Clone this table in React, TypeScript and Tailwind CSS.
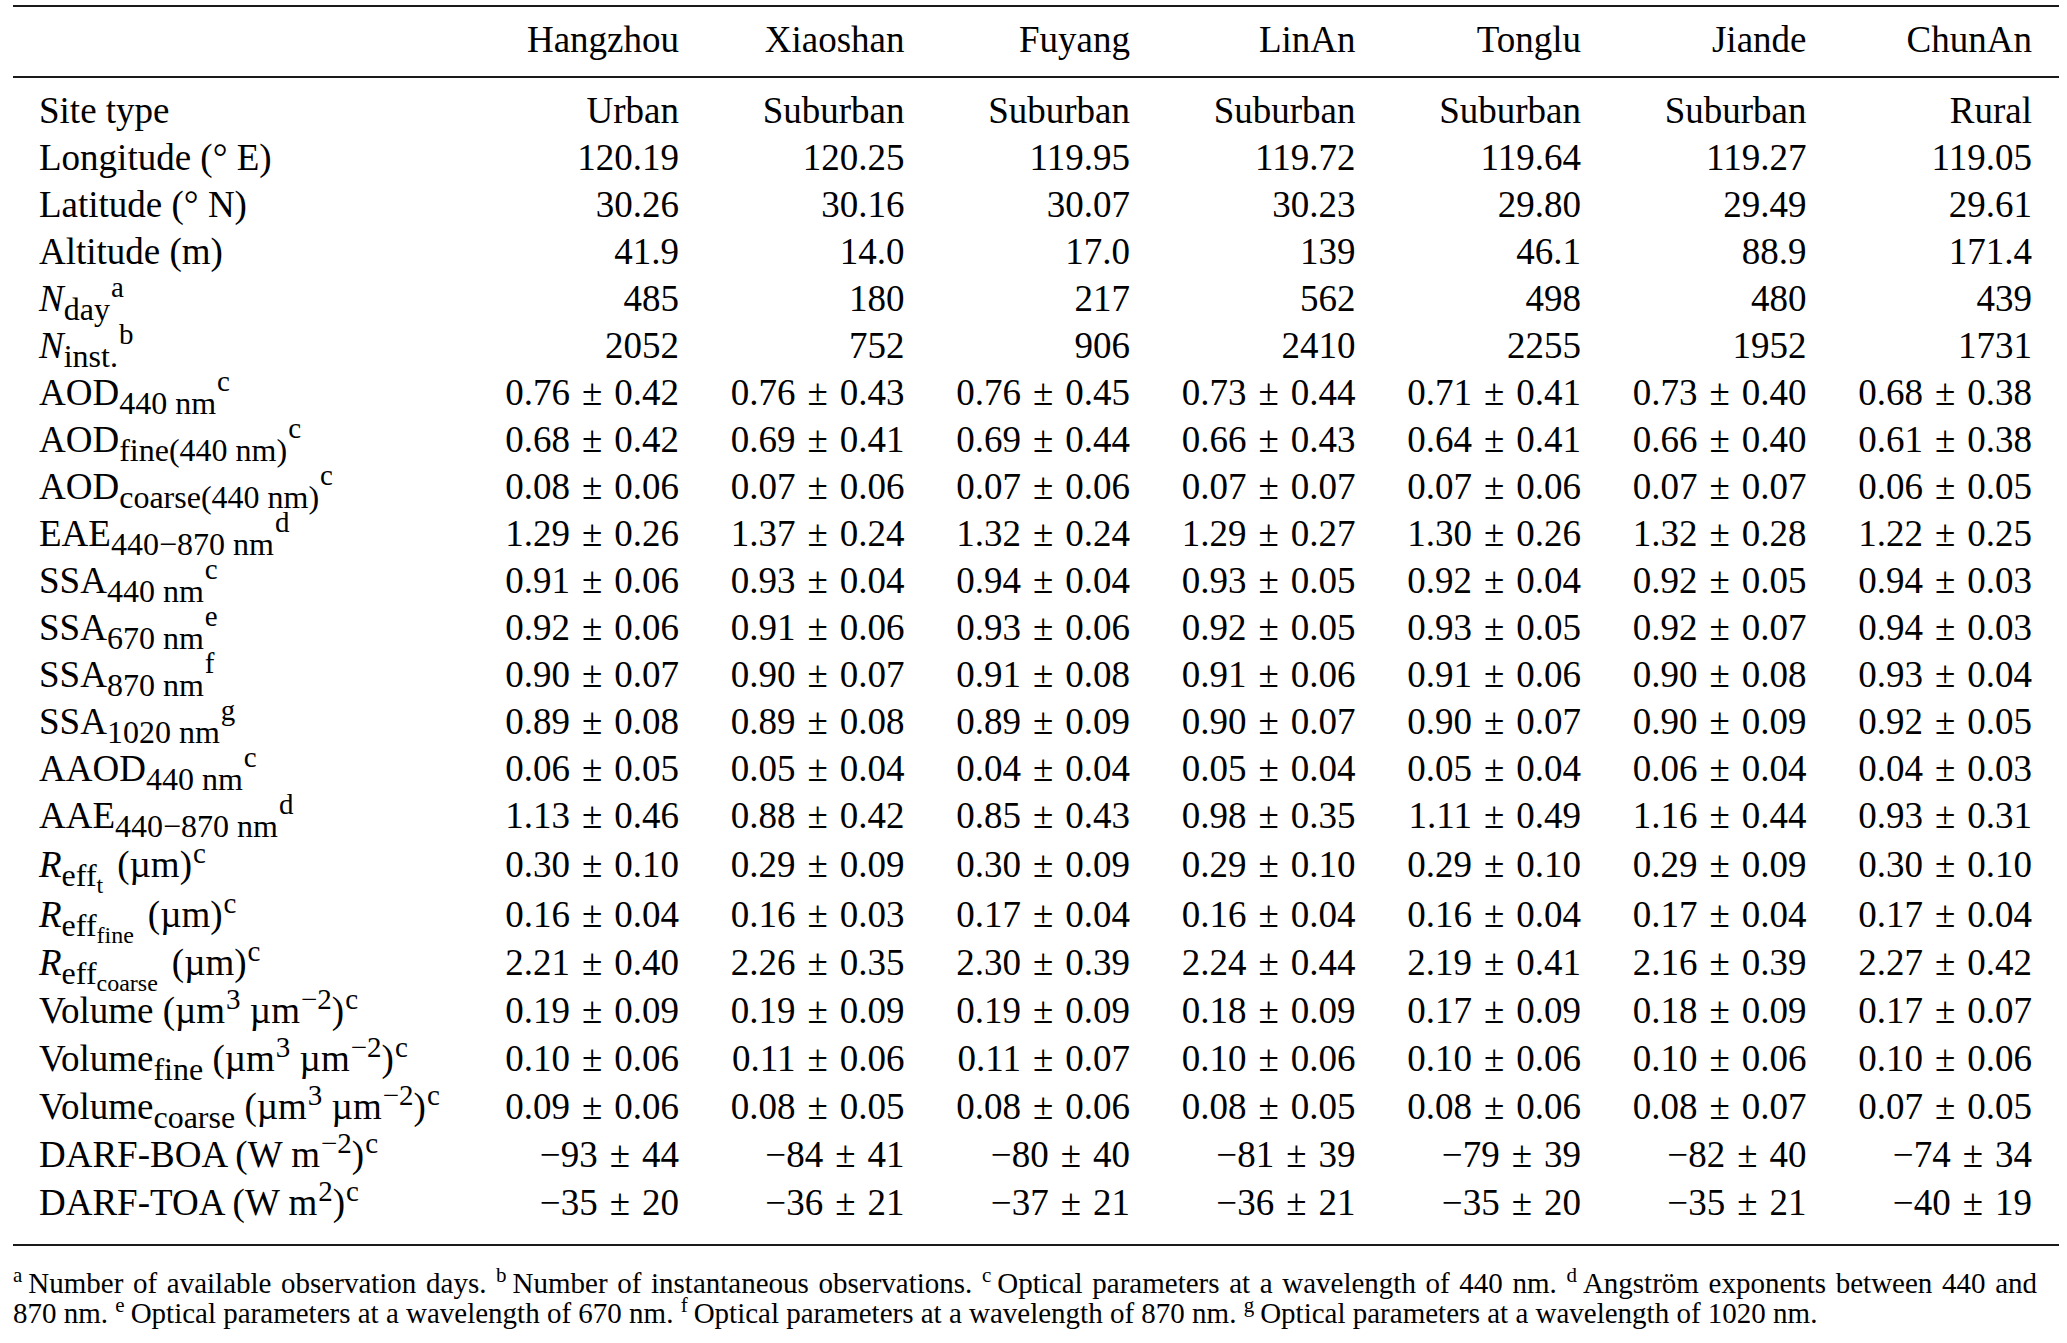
import React from 'react';

const Sub = ({ children }: { children: React.ReactNode }) => (
  <sub className="text-[32px] -bottom-[9px]">{children}</sub>
);

const SubSub = ({ children }: { children: React.ReactNode }) => (
  <sub className="text-[24px] -bottom-[7px]">{children}</sub>
);

const Sup = ({ children }: { children: React.ReactNode }) => (
  <sup className="text-[29px] -top-[14px] ml-[1px]">{children}</sup>
);

const Val = ({ v }: { v: string }) => {
  const parts = v.split('±');
  if (parts.length < 2) return <>{v}</>;
  return (
    <>
      {parts[0]}
      <span className="mx-[12px]">±</span>
      {parts[1]}
    </>
  );
};

const sites = ['Hangzhou', 'Xiaoshan', 'Fuyang', 'LinAn', 'Tonglu', 'Jiande', 'ChunAn'];

const rows: { label: React.ReactNode; values: string[]; h: string }[] = [
  { label: 'Site type', values: ['Urban', 'Suburban', 'Suburban', 'Suburban', 'Suburban', 'Suburban', 'Rural'], h: 'leading-[47px]' },
  { label: 'Longitude (° E)', values: ['120.19', '120.25', '119.95', '119.72', '119.64', '119.27', '119.05'], h: 'leading-[47px]' },
  { label: 'Latitude (° N)', values: ['30.26', '30.16', '30.07', '30.23', '29.80', '29.49', '29.61'], h: 'leading-[47px]' },
  { label: 'Altitude (m)', values: ['41.9', '14.0', '17.0', '139', '46.1', '88.9', '171.4'], h: 'leading-[47px]' },
  {
    label: (<><i>N</i><Sub>day</Sub><Sup>a</Sup></>),
    values: ['485', '180', '217', '562', '498', '480', '439'],
    h: 'leading-[47px]',
  },
  {
    label: (<><i>N</i><Sub>inst.</Sub><Sup>b</Sup></>),
    values: ['2052', '752', '906', '2410', '2255', '1952', '1731'],
    h: 'leading-[47px]',
  },
  {
    label: (<>AOD<Sub>440 nm</Sub><Sup>c</Sup></>),
    values: ['0.76±0.42', '0.76±0.43', '0.76±0.45', '0.73±0.44', '0.71±0.41', '0.73±0.40', '0.68±0.38'],
    h: 'leading-[47px]',
  },
  {
    label: (<>AOD<Sub>fine(440 nm)</Sub><Sup>c</Sup></>),
    values: ['0.68±0.42', '0.69±0.41', '0.69±0.44', '0.66±0.43', '0.64±0.41', '0.66±0.40', '0.61±0.38'],
    h: 'leading-[47px]',
  },
  {
    label: (<>AOD<Sub>coarse(440 nm)</Sub><Sup>c</Sup></>),
    values: ['0.08±0.06', '0.07±0.06', '0.07±0.06', '0.07±0.07', '0.07±0.06', '0.07±0.07', '0.06±0.05'],
    h: 'leading-[47px]',
  },
  {
    label: (<>EAE<Sub>440−870 nm</Sub><Sup>d</Sup></>),
    values: ['1.29±0.26', '1.37±0.24', '1.32±0.24', '1.29±0.27', '1.30±0.26', '1.32±0.28', '1.22±0.25'],
    h: 'leading-[47px]',
  },
  {
    label: (<>SSA<Sub>440 nm</Sub><Sup>c</Sup></>),
    values: ['0.91±0.06', '0.93±0.04', '0.94±0.04', '0.93±0.05', '0.92±0.04', '0.92±0.05', '0.94±0.03'],
    h: 'leading-[47px]',
  },
  {
    label: (<>SSA<Sub>670 nm</Sub><Sup>e</Sup></>),
    values: ['0.92±0.06', '0.91±0.06', '0.93±0.06', '0.92±0.05', '0.93±0.05', '0.92±0.07', '0.94±0.03'],
    h: 'leading-[47px]',
  },
  {
    label: (<>SSA<Sub>870 nm</Sub><Sup>f</Sup></>),
    values: ['0.90±0.07', '0.90±0.07', '0.91±0.08', '0.91±0.06', '0.91±0.06', '0.90±0.08', '0.93±0.04'],
    h: 'leading-[47px]',
  },
  {
    label: (<>SSA<Sub>1020 nm</Sub><Sup>g</Sup></>),
    values: ['0.89±0.08', '0.89±0.08', '0.89±0.09', '0.90±0.07', '0.90±0.07', '0.90±0.09', '0.92±0.05'],
    h: 'leading-[47px]',
  },
  {
    label: (<>AAOD<Sub>440 nm</Sub><Sup>c</Sup></>),
    values: ['0.06±0.05', '0.05±0.04', '0.04±0.04', '0.05±0.04', '0.05±0.04', '0.06±0.04', '0.04±0.03'],
    h: 'leading-[47px]',
  },
  {
    label: (<>AAE<Sub>440−870 nm</Sub><Sup>d</Sup></>),
    values: ['1.13±0.46', '0.88±0.42', '0.85±0.43', '0.98±0.35', '1.11±0.49', '1.16±0.44', '0.93±0.31'],
    h: 'leading-[47px]',
  },
  {
    label: (<><i>R</i><Sub>eff<SubSub>t</SubSub></Sub><span className="ml-[14px]">(µm)</span><Sup>c</Sup></>),
    values: ['0.30±0.10', '0.29±0.09', '0.30±0.09', '0.29±0.10', '0.29±0.10', '0.29±0.09', '0.30±0.10'],
    h: 'leading-[52px]',
  },
  {
    label: (<><i>R</i><Sub>eff<SubSub>fine</SubSub></Sub><span className="ml-[14px]">(µm)</span><Sup>c</Sup></>),
    values: ['0.16±0.04', '0.16±0.03', '0.17±0.04', '0.16±0.04', '0.16±0.04', '0.17±0.04', '0.17±0.04'],
    h: 'leading-[48px]',
  },
  {
    label: (<><i>R</i><Sub>eff<SubSub>coarse</SubSub></Sub><span className="ml-[14px]">(µm)</span><Sup>c</Sup></>),
    values: ['2.21±0.40', '2.26±0.35', '2.30±0.39', '2.24±0.44', '2.19±0.41', '2.16±0.39', '2.27±0.42'],
    h: 'leading-[48px]',
  },
  {
    label: (<>Volume (µm<Sup>3</Sup> µm<Sup>−2</Sup>)<Sup>c</Sup></>),
    values: ['0.19±0.09', '0.19±0.09', '0.19±0.09', '0.18±0.09', '0.17±0.09', '0.18±0.09', '0.17±0.07'],
    h: 'leading-[48px]',
  },
  {
    label: (<>Volume<Sub>fine</Sub> (µm<Sup>3</Sup> µm<Sup>−2</Sup>)<Sup>c</Sup></>),
    values: ['0.10±0.06', '0.11±0.06', '0.11±0.07', '0.10±0.06', '0.10±0.06', '0.10±0.06', '0.10±0.06'],
    h: 'leading-[48px]',
  },
  {
    label: (<>Volume<Sub>coarse</Sub> (µm<Sup>3</Sup> µm<Sup>−2</Sup>)<Sup>c</Sup></>),
    values: ['0.09±0.06', '0.08±0.05', '0.08±0.06', '0.08±0.05', '0.08±0.06', '0.08±0.07', '0.07±0.05'],
    h: 'leading-[48px]',
  },
  {
    label: (<>DARF-BOA (W m<Sup>−2</Sup>)<Sup>c</Sup></>),
    values: ['−93±44', '−84±41', '−80±40', '−81±39', '−79±39', '−82±40', '−74±34'],
    h: 'leading-[48px]',
  },
  {
    label: (<>DARF-TOA (W m<Sup>2</Sup>)<Sup>c</Sup></>),
    values: ['−35±20', '−36±21', '−37±21', '−36±21', '−35±20', '−35±21', '−40±19'],
    h: 'leading-[48px]',
  },
];

const FnSup = ({ children }: { children: React.ReactNode }) => (
  <sup className="text-[21px] -top-[11px] mr-[6px]">{children}</sup>
);

export default function App() {
  return (
    <div className="min-h-screen bg-white text-black font-['Liberation_Serif','Times_New_Roman',serif]">
      <div className="ml-[13px] w-[2046px] pt-[5px]">
        {/* header */}
        <div className="border-t-2 border-b-2 border-[#1a1a1a] pt-[9px] pb-[13px]">
          <div className="grid grid-cols-[414.5px_repeat(7,225.5px)] pl-[26px] text-[37px] leading-[47px]">
            <div />
            {sites.map((s) => (
              <div key={s} className="text-right">{s}</div>
            ))}
          </div>
        </div>

        {/* body */}
        <div className="border-b-2 border-[#1a1a1a] pt-[9px] pb-[17px]">
          {rows.map((row, i) => (
            <div
              key={i}
              className={`grid grid-cols-[414.5px_repeat(7,225.5px)] pl-[26px] text-[37px] ${row.h}`}
            >
              <div className="whitespace-nowrap">{row.label}</div>
              {row.values.map((v, j) => (
                <div key={j} className="text-right whitespace-nowrap">
                  <Val v={v} />
                </div>
              ))}
            </div>
          ))}
        </div>

        {/* footnotes */}
        <div className="mt-[22px] w-[2024px] text-[29px] leading-[30px]">
          <div className="text-justify [text-align-last:justify]">
            <FnSup>a</FnSup>Number of available observation days. <FnSup>b</FnSup>Number of instantaneous observations.{' '}
            <FnSup>c</FnSup>Optical parameters at a wavelength of 440 nm. <FnSup>d</FnSup>Angström exponents between 440 and
          </div>
          <div className="whitespace-nowrap">
            870 nm. <FnSup>e</FnSup>Optical parameters at a wavelength of 670 nm. <FnSup>f</FnSup>Optical parameters at a
            wavelength of 870 nm. <FnSup>g</FnSup>Optical parameters at a wavelength of 1020 nm.
          </div>
        </div>
      </div>
    </div>
  );
}
